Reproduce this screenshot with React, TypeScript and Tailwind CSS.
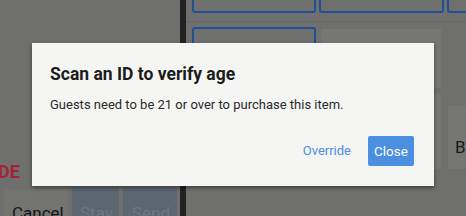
import React from "react";

export default function App() {
  return (
    <div className="relative w-[466px] h-[216px] overflow-hidden bg-[#6f6f6d] flex font-['Roboto',sans-serif]">
      {/* left pane */}
      <div className="w-[180px] shrink-0 flex flex-col pt-[161px]">
        <div className="ml-[-2px] h-[22px] text-[18px] leading-[22px] font-bold text-[#a4233a]">DE</div>
        <div className="flex items-start gap-[4px] pl-[4px] pt-[4px]">
          <div className="mt-[3px] w-[64px] h-[40px] shrink-0 bg-[#737371] text-[#151515] text-[17px] leading-[20px] pl-[8px] pt-[13px]">Cancel</div>
          <div className="w-[47px] h-[40px] shrink-0 bg-[#5b6670] text-[#6b7883] text-[17px] leading-[20px] pl-[8px] pt-[16px]">Stay</div>
          <div className="w-[54px] h-[40px] shrink-0 bg-[#5b6670] text-[#6b7883] text-[17px] leading-[20px] pl-[9px] pt-[16px]">Send</div>
        </div>
      </div>
      {/* divider */}
      <div className="w-[6px] shrink-0 bg-[#222222]" />
      {/* right pane */}
      <div className="flex-1 min-w-0 overflow-hidden flex flex-col">
        <div className="flex gap-[3px] pl-[6px] mt-[-27px] pb-[8px] border-b border-[#666664]">
          <div className="w-[124px] h-[40px] shrink-0 rounded-[3px] border-2 border-[#1f4f94] bg-[#6f6f6d]" />
          <div className="w-[125px] h-[40px] shrink-0 rounded-[3px] border-2 border-[#1f4f94] bg-[#6f6f6d]" />
          <div className="w-[125px] h-[40px] shrink-0 rounded-[3px] border-2 border-[#1f4f94] bg-[#6f6f6d]" />
        </div>
        <div className="flex items-start pl-[6px] pt-[5px]">
          <div className="w-[124px] h-[60px] shrink-0 rounded-[3px] border-2 border-[#1f4f94] bg-[#6f6f6d]" />
          <div className="ml-[5px] mt-[2px] w-[120px] h-[59px] shrink-0 bg-[#767674]" />
        </div>
        <div className="flex items-start pl-[135px] pt-[6px]">
          <div className="w-[120px] h-[75px] shrink-0 bg-[#767674]" />
          <div className="ml-[7px] mt-[12px] w-[60px] h-[63px] shrink-0 bg-[#767674] pl-[7px] pt-[31px] text-[17px] leading-[20px] text-[#1a1a1a]">Ba</div>
        </div>
      </div>

      {/* dialog */}
      <div className="absolute left-[32px] top-[43px] w-[402px] h-[143px] bg-[#f5f6f3] shadow-[0_2px_4px_rgba(0,0,0,0.45)] flex flex-col pl-[18px] pr-[20px] pt-[19px]">
        <div className="text-[17.5px] leading-[24px] font-bold text-[#1c1c1c]">Scan an ID to verify age</div>
        <div className="mt-[9px] text-[13px] leading-[20px] text-[#2a2a2a]">Guests need to be 21 or over to purchase this item.</div>
        <div className="mt-[21px] flex justify-end items-center">
          <div className="text-[13px] leading-[20px] text-[#4a8fdc] mr-[17px]">Override</div>
          <div className="w-[46px] h-[30px] rounded-[2px] bg-[#4a8fe0] text-white text-[13.5px] leading-[30px] text-center">Close</div>
        </div>
      </div>
    </div>
  );
}
